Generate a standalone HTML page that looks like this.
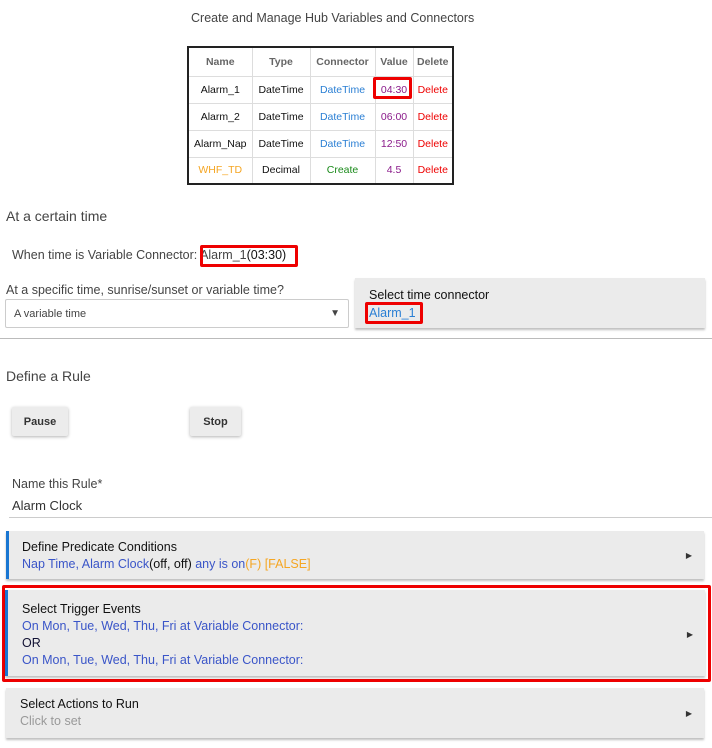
<!DOCTYPE html>
<html><head><style>
*{margin:0;padding:0;box-sizing:border-box}
body{width:712px;height:748px;background:#fff;font-family:"Liberation Sans",sans-serif;position:relative;overflow:hidden;color:#333}
.a{position:absolute;white-space:nowrap}
table{position:absolute;left:187px;top:46px;border-collapse:collapse;border:2px solid #222;font-size:10.5px;width:267px}
td,th{border:1px solid #ddd;text-align:center;height:27px;padding:0;color:#111}
th{color:#666;height:29px}
td.r{color:#e00}td.p{color:#8a1a8a}td.b{color:#2a7fd4}
.card{position:absolute;left:6px;width:698px;background:#ebebeb;box-shadow:0 2px 2px rgba(0,0,0,.25);font-size:12.5px}
.card .t{position:absolute;left:16px;color:#111}
.arr{position:absolute;right:12px;font-size:8px;color:#333}
.card .bl{color:#3a55c8}
.btn{position:absolute;background:#ececec;box-shadow:0 1px 3px rgba(0,0,0,.3);font-size:11px;font-weight:bold;color:#333;text-align:center;line-height:30px;border-radius:2px}
.red{position:absolute;border:3px solid #e00;border-radius:2px}
</style></head><body>
<div class="a" style="left:191px;top:11px;font-size:12.5px;color:#444">Create and Manage Hub Variables and Connectors</div>
<table>
<tr><th style="width:64px">Name</th><th style="width:58px">Type</th><th style="width:65px">Connector</th><th style="width:38px">Value</th><th style="width:40px">Delete</th></tr>
<tr><td>Alarm_1</td><td>DateTime</td><td class="b">DateTime</td><td class="p">04:30</td><td class="r">Delete</td></tr>
<tr><td>Alarm_2</td><td>DateTime</td><td class="b">DateTime</td><td class="p">06:00</td><td class="r">Delete</td></tr>
<tr><td>Alarm_Nap</td><td>DateTime</td><td class="b">DateTime</td><td class="p">12:50</td><td class="r">Delete</td></tr>
<tr><td style="color:#f5a623">WHF_TD</td><td>Decimal</td><td style="color:#1a8a1a">Create</td><td class="p">4.5</td><td class="r">Delete</td></tr>
</table>
<div class="red" style="left:373px;top:77px;width:39px;height:22px"></div>

<div class="a" style="left:6px;top:208px;font-size:14px;color:#444">At a certain time</div>
<div class="a" style="left:12px;top:248px;font-size:12.5px;color:#444">When time is Variable Connector: <span>Alarm_1</span><span style="color:#111">(03:30)</span></div>
<div class="red" style="left:200px;top:245px;width:98px;height:22px"></div>
<div class="a" style="left:6px;top:283px;font-size:12.5px;color:#444">At a specific time, sunrise/sunset or variable time?</div>
<div class="a" style="left:5px;top:299px;width:344px;height:29px;border:1px solid #ccc;border-radius:2px;font-size:11px;color:#444;padding:8px 0 0 8px">A variable time<span style="position:absolute;right:8px;top:8px;font-size:10px">▼</span></div>
<div class="card" style="left:355px;width:350px;top:278px;height:50px">
<div class="t" style="left:14px;top:10px">Select time connector</div>
<div class="t" style="left:14px;top:28px;color:#2a7fd4">Alarm_1</div></div>
<div class="red" style="left:365px;top:302px;width:58px;height:22px"></div>
<div class="a" style="left:0;top:338px;width:712px;height:1px;background:#bbb"></div>

<div class="a" style="left:6px;top:368px;font-size:14px;color:#444">Define a Rule</div>
<div class="btn" style="left:12px;top:407px;width:56px;height:29px">Pause</div>
<div class="btn" style="left:190px;top:407px;width:51px;height:29px">Stop</div>
<div class="a" style="left:12px;top:477px;font-size:12.5px;color:#444">Name this Rule*</div>
<div class="a" style="left:12px;top:498px;font-size:13px;color:#333">Alarm Clock</div>
<div class="a" style="left:9px;top:517px;width:703px;height:1px;background:#ccc"></div>

<div class="card" style="top:531px;height:48px;border-left:3px solid #1976d2">
<div class="t" style="left:13px;top:9px">Define Predicate Conditions</div>
<div class="t bl" style="left:13px;top:26px">Nap Time, Alarm Clock<span style="color:#111">(off, off)</span> any is on<span style="color:#f5a623">(F) [FALSE]</span></div>
<div class="arr" style="top:20px">▶</div></div>

<div class="red" style="left:2px;top:585px;width:709px;height:97px"></div>
<div class="card" style="top:590px;height:86px;left:5px;width:700px;border-left:3px solid #1976d2">
<div class="t" style="left:14px;top:12px">Select Trigger Events</div>
<div class="t bl" style="left:14px;top:29px">On Mon, Tue, Wed, Thu, Fri at Variable Connector:</div>
<div class="t" style="left:14px;top:46px;color:#113">OR</div>
<div class="t bl" style="left:14px;top:63px">On Mon, Tue, Wed, Thu, Fri at Variable Connector:</div>
<div class="arr" style="top:40px">▶</div></div>

<div class="card" style="top:688px;height:50px">
<div class="t" style="left:14px;top:9px">Select Actions to Run</div>
<div class="t" style="left:14px;top:26px;color:#999">Click to set</div>
<div class="arr" style="top:21px">▶</div></div>
</body></html>
